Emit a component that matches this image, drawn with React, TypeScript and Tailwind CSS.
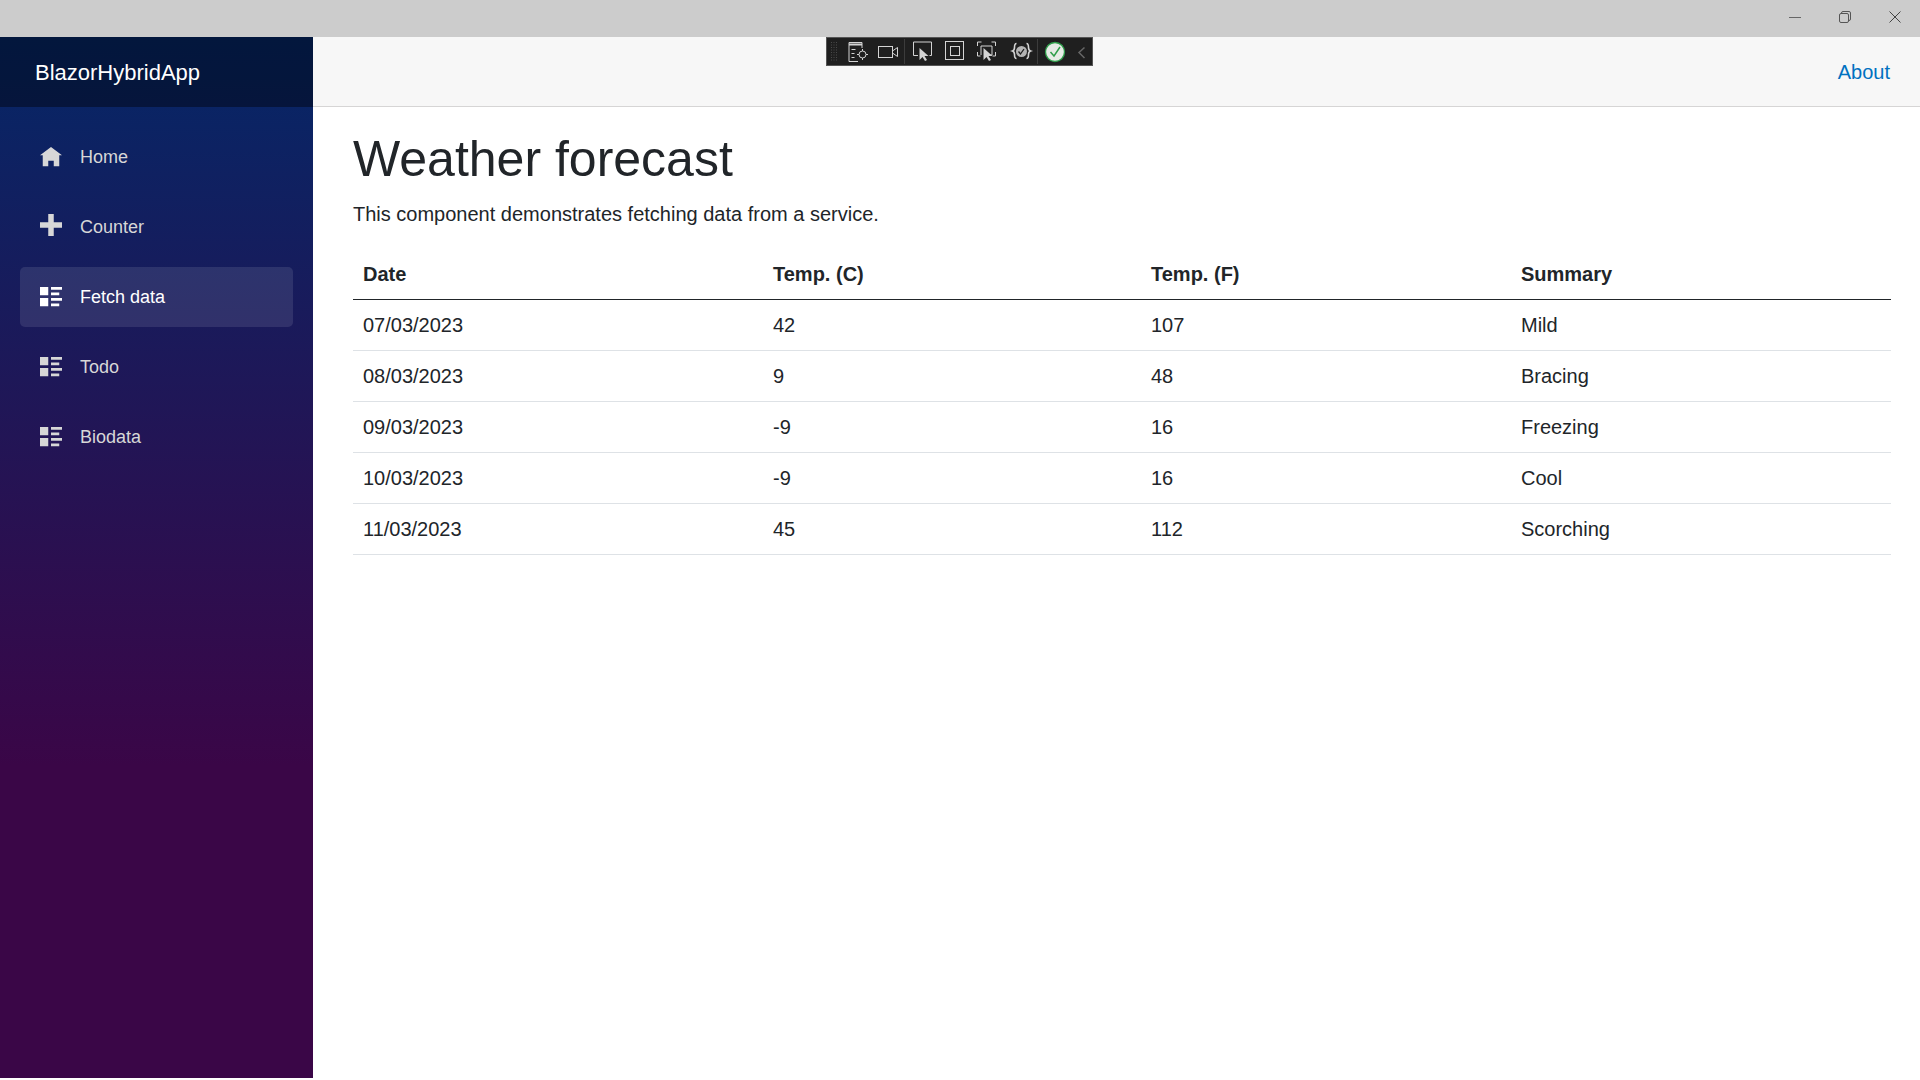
const forecasts = [
  { date: "07/03/2023", c: "42", f: "107", summary: "Mild" },
  { date: "08/03/2023", c: "9", f: "48", summary: "Bracing" },
  { date: "09/03/2023", c: "-9", f: "16", summary: "Freezing" },
  { date: "10/03/2023", c: "-9", f: "16", summary: "Cool" },
  { date: "11/03/2023", c: "45", f: "112", summary: "Scorching" },
];

const iconPaths = {
  home: "M4 0l-4 3h1v4h2v-2h2v2h2v-4.03l1 .03-4-3z",
  plus: "M3 0v3h-3v2h3v3h2v-3h3v-2h-3v-3h-2z",
  list: "M0 0v3h3v-3h-3zm4 0v1h4v-1h-4zm0 2v1h3v-1h-3zm-4 2v3h3v-3h-3zm4 0v1h4v-1h-4zm0 2v1h3v-1h-3z",
};

const navItems = [
  { label: "Home", icon: iconPaths.home, nudge: "translate-y-px" },
  { label: "Counter", icon: iconPaths.plus, nudge: "-translate-y-0.5" },
  { label: "Fetch data", icon: iconPaths.list, nudge: "translate-y-px", active: true },
  { label: "Todo", icon: iconPaths.list, nudge: "translate-y-px" },
  { label: "Biodata", icon: iconPaths.list, nudge: "translate-y-px" },
];

function TitleBar() {
  return (
    <div className="h-[37px] shrink-0 bg-[#cccccc] flex justify-end items-start">
      <button className="w-[50px] h-[34px] flex items-center justify-center">
        <svg width="12" height="12" viewBox="0 0 12 12" fill="none" stroke="#666" strokeWidth="1"><path d="M0 6.5h12" /></svg>
      </button>
      <button className="w-[50px] h-[34px] flex items-center justify-center">
        <svg width="12" height="12" viewBox="0 0 12 12" fill="none" stroke="#555" strokeWidth="1">
          <rect x="0.5" y="2.5" width="9" height="9" rx="1.5" />
          <path d="M2.5 2.5v-.5a1.5 1.5 0 0 1 1.5-1.5h6a1.5 1.5 0 0 1 1.5 1.5v6a1.5 1.5 0 0 1-1.5 1.5h-.5" />
        </svg>
      </button>
      <button className="w-[50px] h-[34px] flex items-center justify-center">
        <svg width="12" height="12" viewBox="0 0 12 12" fill="none" stroke="#444" strokeWidth="1"><path d="M.5.5l11 11M11.5.5l-11 11" /></svg>
      </button>
    </div>
  );
}

function Sidebar() {
  return (
    <div className="w-[313px] shrink-0 flex flex-col bg-[linear-gradient(180deg,#052767_0%,#3a0647_70%)]">
      <div className="h-[70px] shrink-0 flex items-center pl-[35px] bg-black/40 text-white text-[22px]">BlazorHybridApp</div>
      <nav className="pt-[15px]">
        {navItems.map((item) => (
          <div key={item.label} className="h-[70px] px-5 py-[5px] flex items-center">
            <div className={"w-[273px] h-[60px] rounded-[5px] flex items-center text-[18px] " + (item.active ? "bg-white/10 text-white" : "text-[#d7d7d7]")}>
              <svg width="22" height="22" viewBox="0 0 8 8" fill="currentColor" className={"ml-5 mr-[18px] " + item.nudge}>
                <path d={item.icon} />
              </svg>
              {item.label}
            </div>
          </div>
        ))}
      </nav>
    </div>
  );
}

function DebugToolbar() {
  const dots = [];
  for (let y = 5; y < 25; y += 2.5) {
    for (let x = 5; x < 12; x += 2.5) dots.push(<rect key={x + "-" + y} x={x} y={y} width="1" height="1" fill="#4a4a4a" stroke="none" />);
  }
  return (
    <div className="absolute left-[513px] top-0 w-[267px] h-[29px] bg-[#1f1f1f] border border-[#555] box-border">
      <svg width="265" height="27" viewBox="1 1 265 27" fill="none" stroke="#d4d4d4" strokeWidth="1">
        {dots}
        {/* live visual tree */}
        <path d="M36 11v-5.500h-13v19h9" />
        <path d="M23 7.500h13" strokeWidth="2" />
        <path d="M25.500 12.500h4M25.500 16.500h3M25.500 20.500h3" />
        <circle cx="36.500" cy="17.500" r="3.500" />
        <path d="M36.500 12v2M36.500 21v2M31 17.500h2M40 17.500h2" />
        {/* camera */}
        <rect x="52.500" y="9.500" width="14" height="11" />
        <path d="M66.500 14l5-3.500v9l-5-3.500" />
        <path d="M78.500 2v25" stroke="#3c3c3c" />
        {/* select */}
        <path d="M92 18.500h-4.500v-13.500h18v13.500h-2" />
        <path d="M93.500 11v12l3-3 2.500 4 2-1-2.500-4h4z" fill="#d4d4d4" stroke="none" />
        {/* layout */}
        <rect x="119.500" y="4.500" width="18" height="18" />
        <rect x="124.500" y="9.500" width="9" height="9" />
        {/* track focus */}
        <path d="M151.500 9v-4h4M165.500 5h4v4M169.500 15v4h-3M151.500 15v4h3" />
        <path d="M155 18v-9h11v9h-2" />
        <path d="M157.500 11v12l3-3 2.500 4 2-1-2.500-4h4z" fill="#d4d4d4" stroke="none" />
        {/* binding */}
        <path d="M190.500 6.500c-2 0-2 1.500-2 4s-.5 3-2 3.500c1.500.5 2 1 2 3.500s0 4 2 4M200.500 6.500c2 0 2 1.500 2 4s.5 3 2 3.500c-1.500.5-2 1-2 3.500s0 4-2 4" strokeWidth="1.600" />
        <circle cx="195.500" cy="14.500" r="5.500" fill="#b4b4b4" stroke="none" />
        <path d="M192.500 14.500l2 2.500 3.500-5" stroke="#1f1f1f" strokeWidth="1.300" />
        <path d="M211.500 2v25" stroke="#3c3c3c" />
        {/* hot reload status */}
        <circle cx="229" cy="15" r="9.500" fill="#e6ece6" stroke="#2e9e4a" strokeWidth="1.300" />
        <path d="M224.500 15l3.500 4 6-9" stroke="#2e9e4a" strokeWidth="1.500" />
        <path d="M258.500 10.500l-5.500 5 5.500 5.500" stroke="#666" strokeWidth="1.500" />
      </svg>
    </div>
  );
}

function FetchData() {
  return (
    <article className="pt-[22px] pl-10 pr-[29px]">
      <h1 className="text-[50px] leading-[60px] mb-[10px] text-[#212529]">Weather forecast</h1>
      <p className="text-[20px] leading-[30px] mb-5 text-[#212529]">This component demonstrates fetching data from a service.</p>
      <table className="w-full table-fixed border-collapse text-[20px] leading-[30px] text-[#212529]">
        <thead>
          <tr className="border-b border-[#212529]">
            <th className="w-[410px] p-[10px] text-left font-bold">Date</th>
            <th className="w-[378px] p-[10px] text-left font-bold">Temp. (C)</th>
            <th className="w-[370px] p-[10px] text-left font-bold">Temp. (F)</th>
            <th className="p-[10px] text-left font-bold">Summary</th>
          </tr>
        </thead>
        <tbody>
          {forecasts.map((row) => (
            <tr key={row.date} className="border-b border-[#dee2e6]">
              <td className="p-[10px]">{row.date}</td>
              <td className="p-[10px]">{row.c}</td>
              <td className="p-[10px]">{row.f}</td>
              <td className="p-[10px]">{row.summary}</td>
            </tr>
          ))}
        </tbody>
      </table>
    </article>
  );
}

export default function App() {
  return (
    <div className="h-[1078px] flex flex-col bg-white font-['Liberation_Sans',Arial,sans-serif]">
      <TitleBar />
      <div className="flex-1 flex min-h-0">
        <Sidebar />
        <main className="flex-1 min-w-0">
          <div className="relative h-[70px] bg-[#f7f7f7] border-b border-[#d6d5d5] flex items-center justify-end pr-[30px]">
            <a className="text-[20px] text-[#0071c1]">About</a>
            <DebugToolbar />
          </div>
          <FetchData />
        </main>
      </div>
    </div>
  );
}
